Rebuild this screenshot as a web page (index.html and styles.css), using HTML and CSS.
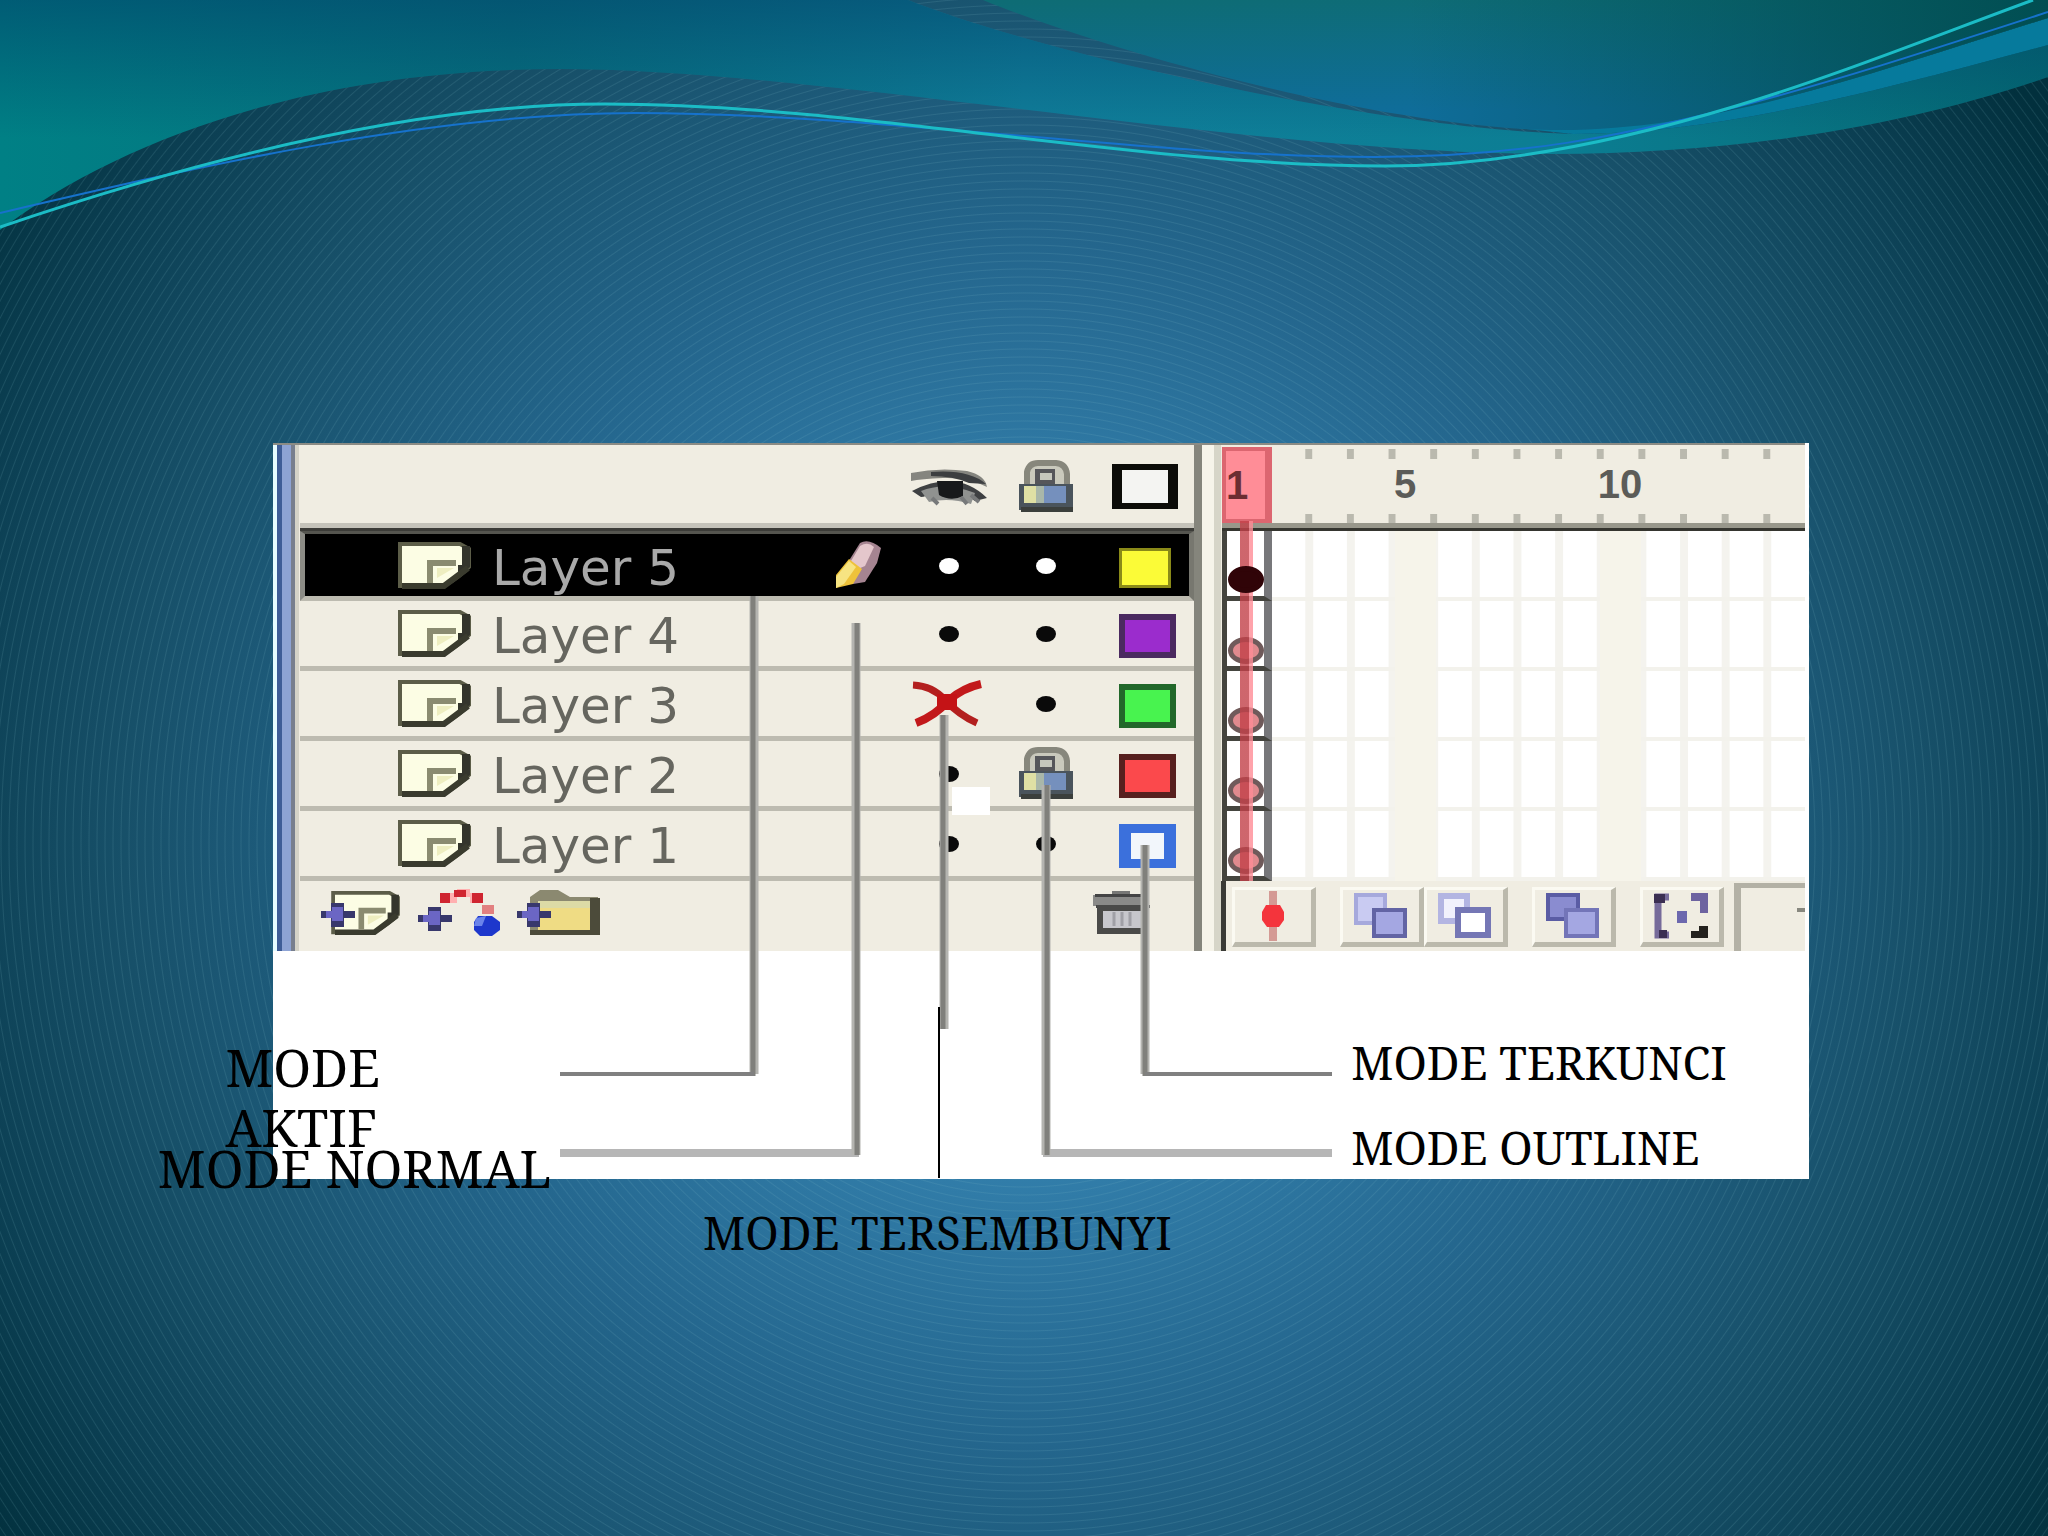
FILE: index.html
```html
<!DOCTYPE html>
<html lang="id">
<head>
<meta charset="utf-8">
<title>Mode Layer</title>
<link rel="stylesheet" href="styles.css">
</head>
<body>
<svg class="defs" aria-hidden="true">
  <symbol id="sheet" viewBox="0 0 74 50">
    <path d="M2 3H62L71 8V26Q62 36 46 45H2Z" fill="#fcfde4" stroke="#5c5d48" stroke-width="4"/>
    <path d="M64 5H72V26L60 35V24H64Z" fill="#34352c"/>
    <path d="M4 45H46L70 27" fill="none" stroke="#3a3b2e" stroke-width="6"/>
    <path d="M32 42V22H58" fill="none" stroke="#8a8b70" stroke-width="6"/>
    <path d="M39 37V27H56Z" fill="#eeeec0"/>
  </symbol>
  <symbol id="lock" viewBox="0 0 60 54">
    <path d="M11 28V12Q13 3 22 3H40Q50 4 51 14V28" fill="#c9c9bc" stroke="#87877c" stroke-width="6"/>
    <path d="M19 9H39V24H19Z" fill="#55565a"/>
    <path d="M24 13H36V20H24Z" fill="#c5c7bd"/>
    <path d="M3 24H57V50H3Z" fill="#4a545c"/>
    <path d="M8 26H24V43H8Z" fill="#dfe0a4"/>
    <path d="M24 26H50V43H24Z" fill="#7590bd"/>
    <path d="M20 26H28V43H20Z" fill="#a9b7a9"/>
    <path d="M5 47H57V52H5Z" fill="#3b3f3c"/>
  </symbol>
  <symbol id="plus" viewBox="0 0 36 26">
    <path d="M11 1H24V9H35V16H24V25H11V16H1V9H11Z" fill="#38386c"/>
    <path d="M6 9H12V5H23V19H12V16H6Z" fill="#6b66c4"/>
  </symbol>
</svg>

<svg class="wave" viewBox="0 0 2048 260" preserveAspectRatio="none" aria-hidden="true">
  <defs>
    <linearGradient id="sea" x2="1">
      <stop offset="0" stop-color="#008085"/><stop offset=".25" stop-color="#07727f"/>
      <stop offset=".5" stop-color="#107f9b"/><stop offset=".75" stop-color="#0c7e94"/>
      <stop offset="1" stop-color="#046a72"/>
    </linearGradient>
    <linearGradient id="seaTop" x2="0" y2="1">
      <stop offset="0" stop-color="#003f68" stop-opacity=".55"/>
      <stop offset=".6" stop-color="#003f68" stop-opacity="0"/>
    </linearGradient>
    <linearGradient id="bay" x2=".15" y2="1">
      <stop offset="0" stop-color="#0e6c74"/><stop offset=".9" stop-color="#0f6d9a"/>
    </linearGradient>
    <linearGradient id="bayEnd" x2="1">
      <stop offset=".4" stop-color="#014e52" stop-opacity="0"/>
      <stop offset="1" stop-color="#014e52"/>
    </linearGradient>
  </defs>
  <path fill="url(#sea)" d="M0 0H908C1050 56 1380 129 1573 134C1720 134 1880 90 2048 45V77C1910 125 1740 154 1550 154C1250 154 820 69 560 69C310 69 120 140 0 230Z"/>
  <path fill="url(#seaTop)" d="M0 0H908C1050 56 1380 129 1573 134C1720 134 1880 90 2048 45V77C1910 125 1740 154 1550 154C1250 154 820 69 560 69C310 69 120 140 0 230Z"/>
  <path fill="#067a9c" d="M1480 124L1560 128C1720 130 1880 70 2048 18V45C1880 90 1720 134 1573 134Z"/>
  <path fill="url(#bay)" d="M983 0C1130 60 1400 130 1560 130C1720 130 1880 70 2048 18V0Z"/>
  <path fill="url(#bayEnd)" d="M983 0C1130 60 1400 130 1560 130C1720 130 1880 70 2048 18V0Z"/>
  <path class="swell blue" d="M0 213C200 166 430 113 635 113C880 113 1150 157 1375 157C1520 157 1620 136 1736 107C1840 80 1940 47 2048 12"/>
  <path class="swell teal" d="M0 227C200 159 420 104 605 104C860 104 1130 166 1385 166C1510 166 1640 135 1736 106C1832 77 1930 38 2033 0"/>
</svg>

<main class="slide">
  <figure class="figure">
    <div class="panel">
      <section class="layers">
        <header class="layers-head row">
          <button class="cell eye" aria-label="Tampilkan"><svg width="80" height="40" viewBox="0 0 80 40">
            <path d="M2 6Q30 0 58 4Q76 8 78 20Q60 10 34 11Q12 12 2 14Z" fill="#85857f"/>
            <path d="M22 5Q60 2 77 17L60 16Q44 9 22 9Z" fill="#3c3e40"/>
            <path d="M3 24Q22 14 40 14Q62 15 78 31L66 34Q46 20 28 24Q16 30 12 30Z" fill="#3e4042"/>
            <path d="M12 24Q36 14 66 26L62 37Q40 30 20 35Z" fill="#909290"/>
            <path d="M28 14H54V29Q42 35 30 28Z" fill="#17191b"/>
            <path d="M23 31L29 37M52 30L58 37M62 28L70 35" stroke="#77797a" stroke-width="4"/>
          </svg></button>
          <button class="cell" aria-label="Kunci"><svg width="60" height="54"><use href="#lock"/></svg></button>
          <button class="cell" aria-label="Outline"><span class="outline-box"></span></button>
        </header>
        <ul class="layer-list">
          <li class="row layer active">
            <svg class="sheet" width="74" height="50"><use href="#sheet"/></svg>
            <span class="name">Layer 5</span>
            <span class="cell"><svg width="52" height="54" viewBox="0 0 52 54">
              <path d="M29 4Q38 -1 50 9L46 24L34 43L22 45L14 28Z" fill="#a58491"/>
              <path d="M29 7Q37 2 43 8L34 27L22 32L20 22Z" fill="#e4c7cc"/>
              <path d="M18 20L31 30L22 45L5 49V36Z" fill="#eec23a"/>
              <path d="M18 22L25 28L13 45L5 49V38Z" fill="#f7e482"/>
            </svg></span>
            <button class="cell" aria-label="Tampil"><i class="dot"></i></button>
            <button class="cell" aria-label="Kunci"><i class="dot"></i></button>
            <button class="cell" aria-label="Warna"><span class="swatch yellow"></span></button>
          </li>
          <li class="row layer">
            <svg class="sheet" width="74" height="50"><use href="#sheet"/></svg>
            <span class="name">Layer 4</span>
            <span class="cell"></span>
            <button class="cell" aria-label="Tampil"><i class="dot"></i></button>
            <button class="cell" aria-label="Kunci"><i class="dot"></i></button>
            <button class="cell" aria-label="Warna"><span class="swatch purple"></span></button>
          </li>
          <li class="row layer">
            <svg class="sheet" width="74" height="50"><use href="#sheet"/></svg>
            <span class="name">Layer 3</span>
            <span class="cell"></span>
            <button class="cell" aria-label="Tersembunyi"><svg width="76" height="48" viewBox="0 0 76 48">
              <path d="M2 5Q22 6 34 20Q48 35 66 43" fill="none" stroke="#b3201f" stroke-width="7"/>
              <path d="M70 4Q52 8 38 20Q24 36 5 43" fill="none" stroke="#c2191b" stroke-width="8"/>
              <path d="M26 14H46V30H26Z" fill="#c41316"/>
            </svg></button>
            <button class="cell" aria-label="Kunci"><i class="dot"></i></button>
            <button class="cell" aria-label="Warna"><span class="swatch green"></span></button>
          </li>
          <li class="row layer">
            <svg class="sheet" width="74" height="50"><use href="#sheet"/></svg>
            <span class="name">Layer 2</span>
            <span class="cell"></span>
            <button class="cell" aria-label="Tampil"><i class="dot"></i></button>
            <button class="cell" aria-label="Terkunci"><svg width="60" height="54"><use href="#lock"/></svg></button>
            <button class="cell" aria-label="Warna"><span class="swatch red"></span></button>
          </li>
          <li class="row layer">
            <svg class="sheet" width="74" height="50"><use href="#sheet"/></svg>
            <span class="name">Layer 1</span>
            <span class="cell"></span>
            <button class="cell" aria-label="Tampil"><i class="dot"></i></button>
            <button class="cell" aria-label="Kunci"><i class="dot"></i></button>
            <button class="cell" aria-label="Warna"><span class="swatch hollow"></span></button>
          </li>
        </ul>
        <footer class="tools">
          <button aria-label="Layer baru"><svg width="84" height="50" viewBox="0 0 84 50">
            <use href="#sheet" x="10" y="2" width="72" height="47"/><use href="#plus" x="0" y="14" width="36" height="26"/>
          </svg></button>
          <button aria-label="Layer pemandu"><svg width="88" height="50" viewBox="0 0 88 50">
            <path d="M27 5H41V1H54V5H66V15H54V9H41V15H27Z" fill="#ffb0b0"/>
            <path d="M24 5H34V15H24ZM38 2H50V9H38ZM56 5H67V15H56Z" fill="#cf2530"/>
            <path d="M66 17H78V26H66Z" fill="#e28080"/>
            <use href="#plus" x="0" y="18" width="38" height="26"/>
            <path d="M62 28H76L84 34V42L76 48H64L58 42V34Z" fill="#1d37cc"/>
            <path d="M60 30L70 28L66 38H58Z" fill="#6a83ea"/>
          </svg></button>
          <button aria-label="Folder baru"><svg width="88" height="50" viewBox="0 0 88 50">
            <path d="M14 9L24 2H42L54 9H82V47H14Z" fill="#8b8970"/>
            <path d="M22 18H74V42H22Z" fill="#efdc84"/><path d="M22 13H74V20H22Z" fill="#dcdba6"/>
            <path d="M74 10H84V47H14V42H74Z" fill="#4c4b3a"/>
            <use href="#plus" x="0" y="14" width="36" height="26"/>
          </svg></button>
          <button class="trash" aria-label="Hapus"><svg width="64" height="46" viewBox="0 0 64 46">
            <path d="M1 5H57V16H1Z" fill="#8a8a88"/><path d="M20 1H38V6H20Z" fill="#777775"/>
            <path d="M3 4H56V7H3ZM4 15H58V18H4Z" fill="#444"/>
            <path d="M8 18H53V41H8Z" fill="#c7c7cc" stroke="#4a4a48" stroke-width="6"/>
            <path d="M22 22V36M30 22V36M38 22V36" stroke="#a0a0a6" stroke-width="3"/>
          </svg></button>
        </footer>
      </section>

      <section class="timeline">
        <div class="ruler">
          <span class="mark current">1</span><span class="mark five">5</span><span class="mark ten">10</span>
        </div>
        <div class="frames">
          <div class="frame-row"><span class="key full"></span><span class="fifth"></span><span class="tenth"></span></div>
          <div class="frame-row"><span class="key"></span><span class="fifth"></span><span class="tenth"></span></div>
          <div class="frame-row"><span class="key"></span><span class="fifth"></span><span class="tenth"></span></div>
          <div class="frame-row"><span class="key"></span><span class="fifth"></span><span class="tenth"></span></div>
          <div class="frame-row"><span class="key"></span><span class="fifth"></span><span class="tenth"></span></div>
        </div>
        <footer class="controls">
          <button aria-label="Pusatkan frame"><svg width="30" height="50" viewBox="0 0 30 50">
            <path d="M11 0H19V50H11Z" fill="#d49a94"/><path d="M8 14H22L26 21V29L21 36H9L4 29V21Z" fill="#f4343c"/>
          </svg></button>
          <button aria-label="Onion skin"><svg width="54" height="46" viewBox="0 0 54 46">
            <path d="M2 2H31V30H2Z" fill="#c9cbf2" stroke="#a6a9dc" stroke-width="4"/>
            <path d="M20 17H51V43H20Z" fill="#a4a7e2" stroke="#6264a4" stroke-width="4"/>
          </svg></button>
          <button class="joined" aria-label="Onion skin outline"><svg width="54" height="46" viewBox="0 0 54 46">
            <path d="M3 3H29V28H3Z" fill="#f1f1fc" stroke="#b3b5e2" stroke-width="6"/>
            <path d="M20 17H50V42H20Z" fill="#fff" stroke="#7577b5" stroke-width="6"/>
          </svg></button>
          <button aria-label="Edit banyak frame"><svg width="54" height="46" viewBox="0 0 54 46">
            <path d="M2 2H32V26H2Z" fill="#8a8cd0" stroke="#5a5ca4" stroke-width="4"/>
            <path d="M20 17H51V43H20Z" fill="#a4a7e2" stroke="#7375b8" stroke-width="4"/>
          </svg></button>
          <button aria-label="Penanda onion"><svg width="56" height="46" viewBox="0 0 56 46">
            <path d="M16 4H5V42H16" fill="none" stroke="#766b9a" stroke-width="7"/>
            <path d="M1 1H12V10H1ZM6 37H14V45H6Z" fill="#3b2f52"/>
            <path d="M38 4H51V20" fill="none" stroke="#6d63a0" stroke-width="8"/>
            <path d="M46 33H55V45H38V38H46Z" fill="#25231f"/>
            <path d="M24 18H34V30H24Z" fill="#6c68ae"/>
          </svg></button>
          <output class="readout"><span></span></output>
        </footer>
      </section>
    </div>

    <svg class="leaders" viewBox="0 0 1536 736" preserveAspectRatio="none" aria-hidden="true">
      <path d="M679 344H717V372H679Z" fill="#fff"/>
      <g class="flat"><path d="M287 710H586M1059 710H770"/></g>
      <g class="halo"><path d="M481 153V631M583 180V712M671 272V586M773 342V712M872 402V631"/></g>
      <g class="core"><path d="M480 153V633M584 180V712M670 272V586M774 342V712M872 402V633"/></g>
      <g class="thin"><path d="M287 631H481M872 631H1059"/></g>
      <path d="M666 564V735" stroke="#000" stroke-width="2"/>
    </svg>
    <p class="label large aktif">MODE AKTIF</p>
    <p class="label large normal">MODE NORMAL</p>
    <p class="label tersembunyi">MODE TERSEMBUNYI</p>
    <p class="label terkunci">MODE TERKUNCI</p>
    <p class="label outline">MODE OUTLINE</p>
  </figure>
</main>
</body>
</html>
```
FILE: styles.css
```css
* { box-sizing: border-box; }

body {
  margin: 0;
  min-height: 100vh;
  position: relative;
  background:
    repeating-radial-gradient(circle at 50% 844px, transparent 0 6px, rgba(130, 190, 200, .15) 7px, transparent 8px),
    radial-gradient(circle at 50% 844px, #3a8abb 0, #3380ad 300px, #24668d 600px, #175069 900px, #0c4054 1080px, #02303d 1250px);
  font-family: "DejaVu Sans", sans-serif;
}

button {
  border: 0;
  padding: 0;
  background: none;
  font: inherit;
}

svg { display: block; }

.defs { position: absolute; width: 0; height: 0; }

/* decorative wave across the top of the slide */
.wave {
  position: absolute;
  top: 0;
  left: 0;
  width: 100%;
  height: 260px;
}
.swell { fill: none; }
.swell.blue { stroke: #1672cc; stroke-width: 2; }
.swell.teal { stroke: #1bbcc6; stroke-width: 3; }

.slide {
  position: relative;
  padding: 443px 11.67% 48px 13.33%;
}

.figure {
  position: relative;
  margin: 0;
  padding-bottom: 228px;
  background: #fff;
}

.panel {
  display: grid;
  grid-template-columns: 929px 1fr;
  margin-right: 4px;
  border-top: 2px solid #8b8b84;
  background: #f0ede2;
}

/* layer list */
.layers {
  padding-left: 27px;
  border-right: 8px solid #85857c;
  background: linear-gradient(90deg, #e6fcff 0 4px, #3e5d97 4px 9px, #8da3d4 9px 18px, #777f8e 18px 22px, #d4d3c8 22px 26px, transparent 26px);
}

.row {
  display: grid;
  grid-template-columns: 74px 1fr 90px 94px 100px 98px;
  padding-left: 98px;
  height: 70px;
  border-bottom: 5px solid #bdbbb0;
}

.layers-head {
  height: 86px;
  border-bottom: 3px solid #3c3c38;
  box-shadow: inset 0 -5px #c5c3ba;
}
.layers-head .eye { grid-column: 4; }

.layer-list { margin: 0; padding: 0; list-style: none; }
.layer { align-items: center; }
.layer.active {
  background: #000;
  border-left: 5px solid #8c8c86;
  border-right: 5px solid #77776f;
  border-top: 3px solid #55554f;
  padding-left: 93px;
  grid-template-columns: 74px 1fr 90px 94px 100px 93px;
}

.name {
  padding: 4px 0 0 20px;
  font-size: 50px;
  line-height: 60px;
  color: #66665f;
}
.active .name { color: #a9a9a9; }

.cell {
  display: flex;
  align-items: center;
  justify-content: center;
}

.dot {
  width: 20px;
  height: 16px;
  border-radius: 50%;
  background: #0a0a0a;
}
.active .dot { background: #fff; }

.outline-box {
  width: 66px;
  height: 45px;
  border: solid #0c0c08;
  border-width: 6px 10px;
  background: #f4f4f2;
}

.swatch {
  width: 57px;
  height: 44px;
  margin: 4px 0 0 6px;
  border: 6px solid #3a3a34;
}
.yellow { background: #fbfb37; border: 3px solid #8a8a18; width: 52px; height: 40px; }
.purple { background: #9b2ccd; border-color: #4b2a60; }
.green { background: #48f34f; border-color: #22682a; }
.red { background: #fb494c; border-color: #57201e; }
.hollow { background: #f2f6fb; border-color: #3b70dc; border-width: 9px 12px; }

.tools {
  display: flex;
  align-items: center;
  gap: 12px;
  height: 70px;
  padding: 0 38px 6px 20px;
}
.trash { margin-left: auto; }

/* frames */
.timeline {
  padding-left: 20px;
  background: linear-gradient(90deg, #f6f4ea 0 12px, #d6d5c8 12px 19px, transparent 19px);
}

.ruler {
  position: relative;
  display: grid;
  grid-template-columns: repeat(14, 1fr);
  height: 86px;
  border-bottom: 3px solid #35352f;
  background:
    linear-gradient(#98978b, #98978b) 0 100% / 100% 5px no-repeat,
    linear-gradient(90deg, #bab9ae 7px, transparent 7px) 0 4px / calc(100% / 14) 10px repeat-x,
    linear-gradient(90deg, #bab9ae 7px, transparent 7px) 0 69px / calc(100% / 14) 9px repeat-x,
    #f0ede2;
}
.mark {
  font: bold 40px/78px "Liberation Sans", sans-serif;
  color: #5c5c58;
  white-space: nowrap;
}
.current {
  position: relative;
  width: 50px;
  height: 76px;
  margin-top: 2px;
  border: 4px solid #dc6670;
  border-right-width: 7px;
  background: #ff8d97;
  color: #6b2d31;
  line-height: 68px;
}
.five { grid-column: 5; }
.ten { grid-column: 10; }

.frames { position: relative; }
/* playhead line */
.frames::after {
  content: "";
  position: absolute;
  top: -10px;
  bottom: 0;
  left: 18px;
  width: 13px;
  background: linear-gradient(90deg, rgba(194, 64, 72, .8) 9px, rgba(255, 140, 150, .8) 9px);
}

.frame-row {
  display: grid;
  grid-template-columns: repeat(14, 1fr);
  height: 70px;
  border-bottom: 4px solid #f3f2ec;
  background: linear-gradient(90deg, #f4f3ee 8px, transparent 8px) 0 0 / calc(100% / 14) 100% #fff;
}
.fifth { grid-column: 5; background: #f6f4ea; }
.tenth { grid-column: 10; background: #f6f4ea; }

.key {
  width: 50px;
  height: 70px;
  display: flex;
  align-items: center;
  justify-content: center;
  border: solid #45453f;
  border-width: 0 8px 5px 5px;
  border-right-color: #77777a;
  background: #fff;
}
.key::before {
  content: "";
  width: 26px;
  height: 17px;
  margin: 34px 0 0 1px;
  border: 5px solid #6f5a5a;
  border-radius: 50%;
  background: #e08a8e;
}
.key.full::before { background: #300408; border-color: #300408; margin-top: 32px; position: relative; z-index: 1; }

.controls {
  display: flex;
  align-items: center;
  gap: 24px;
  height: 70px;
  padding: 2px 0 0 6px;
  border-left: 5px solid #3a3a36;
  margin-left: -1px;
}
.controls button {
  display: flex;
  align-items: center;
  justify-content: center;
  width: 84px;
  height: 60px;
  border: solid #fbfaf2;
  border-width: 3px 5px 5px 3px;
  border-right-color: #bbb9ac;
  border-bottom-color: #bbb9ac;
}
.controls .joined { margin-left: -24px; }
.readout {
  flex: 1;
  align-self: stretch;
  margin-left: -14px;
  padding-bottom: 20px;
  border: solid #b3b1a5;
  border-width: 5px 0 0 7px;
  display: flex;
  align-items: center;
  justify-content: flex-end;
}
.readout span { width: 8px; height: 4px; background: #88887f; }

/* leader lines and captions laid over the picture */
.leaders {
  position: absolute;
  inset: 0;
  width: 100%;
  height: 100%;
  fill: none;
}
.thin { stroke: #808080; stroke-width: 4; }
.flat { stroke: #b6b6b6; stroke-width: 8; }
.halo { stroke: #b4b4b0; stroke-width: 9; }
.core { stroke: #80807c; stroke-width: 5; }

.label {
  position: absolute;
  margin: 0;
  font-family: "Noto Serif", "Droid Serif", "Liberation Serif", serif;
  font-size: 45px;
  line-height: 60px;
  color: #000;
  white-space: nowrap;
}
.large { font-size: 51px; }
.aktif { left: -3.1%; top: 594px; width: 220px; white-space: normal; }
.normal { left: -7.5%; top: 695px; }
.tersembunyi { left: 28%; top: 760px; }
.terkunci { left: 70.2%; top: 590px; }
.outline { left: 70.2%; top: 675px; }
```
